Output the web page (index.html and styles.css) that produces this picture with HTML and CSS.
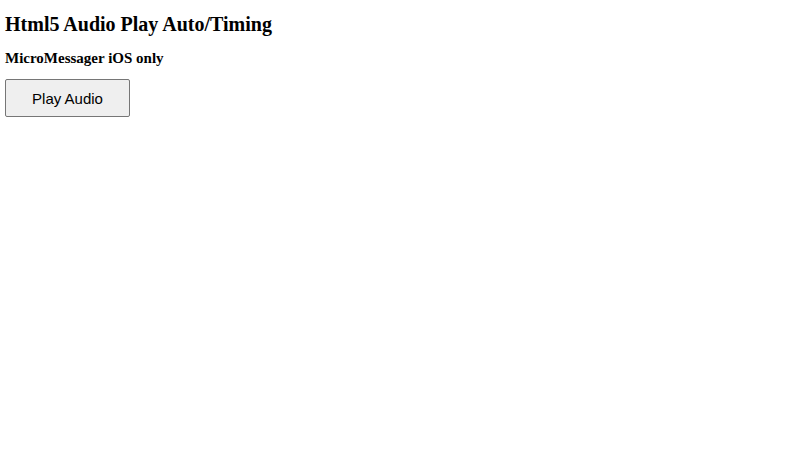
FILE: index.html
```html
<!DOCTYPE html>
<html>
<head>
<meta charset="utf-8">
<title>Html5 Audio Play Auto/Timing</title>
<link rel="stylesheet" href="styles.css">
</head>
<body class="page">
  <h2 class="title">Html5 Audio Play Auto/Timing</h2>
  <h4 class="subtitle">MicroMessager iOS only</h4>
  <button class="play-btn" type="button">Play Audio</button>
</body>
</html>
```
FILE: styles.css
```css
.page {
  margin: 0;
  padding: 5px;
  font-family: "Liberation Serif", "Times New Roman", serif;
  color: #000;
  background: #fff;
}

.title {
  margin: 8px 0 14px;
  font-size: 20px;
  font-weight: bold;
}

.subtitle {
  margin: 0 0 12px;
  font-size: 15px;
  font-weight: bold;
}

.play-btn {
  display: block;
  width: 125px;
  height: 38px;
  padding: 0;
  font-family: "Liberation Sans", Arial, sans-serif;
  font-size: 15px;
  color: #000;
  background: #efefef;
  border: 1px solid #767676;
  border-radius: 2px;
}
```
